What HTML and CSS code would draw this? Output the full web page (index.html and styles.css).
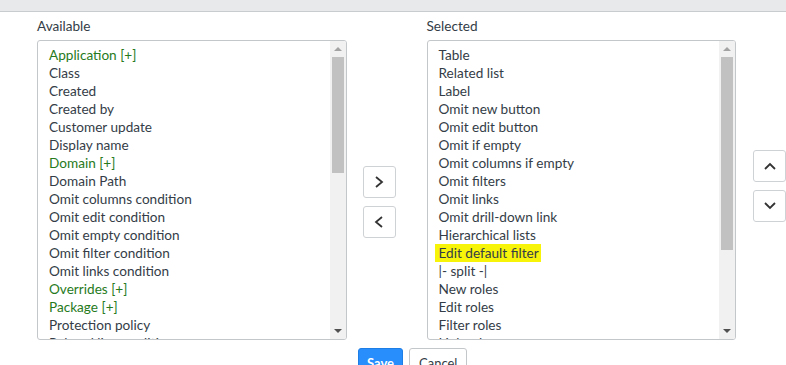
FILE: index.html
```html
<!DOCTYPE html>
<html lang="en">
<head>
  <meta charset="UTF-8">
  <title>Configure list</title>
  <link rel="stylesheet" href="styles.css">
</head>
<body>
  <div class="topbar"></div>

  <div class="slushbucket">
    <!-- Available column -->
    <div class="column">
      <div class="col-label">Available</div>
      <div class="listbox">
        <ul class="items">
          <li class="ref">Application [+]</li>
          <li>Class</li>
          <li>Created</li>
          <li>Created by</li>
          <li>Customer update</li>
          <li>Display name</li>
          <li class="ref">Domain [+]</li>
          <li>Domain Path</li>
          <li>Omit columns condition</li>
          <li>Omit edit condition</li>
          <li>Omit empty condition</li>
          <li>Omit filter condition</li>
          <li>Omit links condition</li>
          <li class="ref">Overrides [+]</li>
          <li class="ref">Package [+]</li>
          <li>Protection policy</li>
          <li>Related list condition</li>
        </ul>
        <div class="scrollbar">
          <span class="arrow up"></span>
          <div class="track"><div class="thumb thumb-left"></div></div>
          <span class="arrow down"></span>
        </div>
      </div>
    </div>

    <!-- add / remove -->
    <div class="move-btns">
      <button class="icon-btn" title="Add">
        <svg width="12" height="14" viewBox="0 0 12 14"><path d="M3 2l6 5-6 5" fill="none" stroke="#333" stroke-width="1.8"/></svg>
      </button>
      <button class="icon-btn" title="Remove">
        <svg width="12" height="14" viewBox="0 0 12 14"><path d="M9 2L3 7l6 5" fill="none" stroke="#333" stroke-width="1.8"/></svg>
      </button>
    </div>

    <!-- Selected column -->
    <div class="column">
      <div class="col-label">Selected</div>
      <div class="listbox">
        <ul class="items">
          <li>Table</li>
          <li>Related list</li>
          <li>Label</li>
          <li>Omit new button</li>
          <li>Omit edit button</li>
          <li>Omit if empty</li>
          <li>Omit columns if empty</li>
          <li>Omit filters</li>
          <li>Omit links</li>
          <li>Omit drill-down link</li>
          <li>Hierarchical lists</li>
          <li><span class="mark">Edit default filter</span></li>
          <li>|- split -|</li>
          <li>New roles</li>
          <li>Edit roles</li>
          <li>Filter roles</li>
          <li>Link roles</li>
        </ul>
        <div class="scrollbar">
          <span class="arrow up"></span>
          <div class="track"><div class="thumb thumb-right"></div></div>
          <span class="arrow down"></span>
        </div>
      </div>
    </div>

    <!-- order -->
    <div class="order-btns">
      <button class="icon-btn" title="Move up">
        <svg width="14" height="12" viewBox="0 0 14 12"><path d="M2 9l5-5 5 5" fill="none" stroke="#333" stroke-width="1.8"/></svg>
      </button>
      <button class="icon-btn" title="Move down">
        <svg width="14" height="12" viewBox="0 0 14 12"><path d="M2 3l5 5 5-5" fill="none" stroke="#333" stroke-width="1.8"/></svg>
      </button>
    </div>
  </div>

  <div class="actions">
    <button class="btn btn-primary">Save</button>
    <button class="btn">Cancel</button>
  </div>
</body>
</html>
```

FILE: styles.css
```css
/* Reset styles */
* {
  margin: 0;
  padding: 0;
  box-sizing: border-box;
}

body {
  font-family: Lato, "Open Sans", sans-serif;
  font-size: 13.6px;
  color: #343d47;
  background-color: #fff;
  width: 786px;
  height: 365px;
  overflow: hidden;
}

.topbar {
  height: 12px;
  background-color: #e7e9eb;
  border-bottom: 1px solid #c9cccf;
}

/* Slushbucket layout */
.slushbucket {
  display: flex;
  align-items: flex-start;
  padding-left: 37px;
}

.column {
  width: 311px;
}

.col-label {
  height: 28px;
  line-height: 26px;
  padding-top: 1px;
}

.listbox {
  display: flex;
  height: 300px;
  border: 1px solid #c4c7ca;
  border-radius: 3px;
  overflow: hidden;
}

.items {
  flex: 1;
  list-style: none;
  padding: 5px 0 0 11px;
  overflow: hidden;
}

.items li {
  height: 18px;
  line-height: 18px;
  white-space: nowrap;
}

.items li.ref {
  color: #277a1c;
}

.mark {
  display: inline-block;
  background-color: #f7f40a;
  padding: 0 2px 0 4px;
  margin-left: -4px;
}

/* Fake scrollbar */
.scrollbar {
  width: 16px;
  display: flex;
  flex-direction: column;
  align-items: center;
  background-color: #f1f1f1;
}

.arrow {
  width: 0;
  height: 0;
  border-left: 4px solid transparent;
  border-right: 4px solid transparent;
  margin: 6px 0;
}

.arrow.up {
  border-bottom: 4px solid #a3a3a3;
}

.arrow.down {
  border-top: 4px solid #505050;
}

.track {
  flex: 1;
  width: 100%;
  padding: 0 2px;
}

.thumb {
  background-color: #c1c1c1;
  width: 100%;
}

.thumb-left {
  height: 116px;
}

.thumb-right {
  height: 193px;
}

/* Buttons */
.icon-btn {
  width: 33px;
  height: 32px;
  display: flex;
  justify-content: center;
  align-items: center;
  background-color: #fff;
  border: 1px solid #cfd2d5;
  border-radius: 3px;
  cursor: pointer;
}

.move-btns {
  display: flex;
  flex-direction: column;
  gap: 8px;
  margin: 154px 31px 0 16px;
}

.order-btns {
  display: flex;
  flex-direction: column;
  gap: 8px;
  margin: 138px 0 0 17px;
}

.actions {
  display: flex;
  gap: 6px;
  padding: 8px 0 0 358px;
}

.btn {
  height: 30px;
  padding: 0 9px;
  font-family: inherit;
  font-size: 13px;
  color: #343d47;
  background-color: #fff;
  border: 1px solid #c4c7ca;
  border-radius: 3px;
  cursor: pointer;
}

.btn-primary {
  width: 45px;
  padding: 0;
  color: #fff;
  font-weight: bold;
  background-color: #278efc;
  border-color: #1f7ee6;
}
```
